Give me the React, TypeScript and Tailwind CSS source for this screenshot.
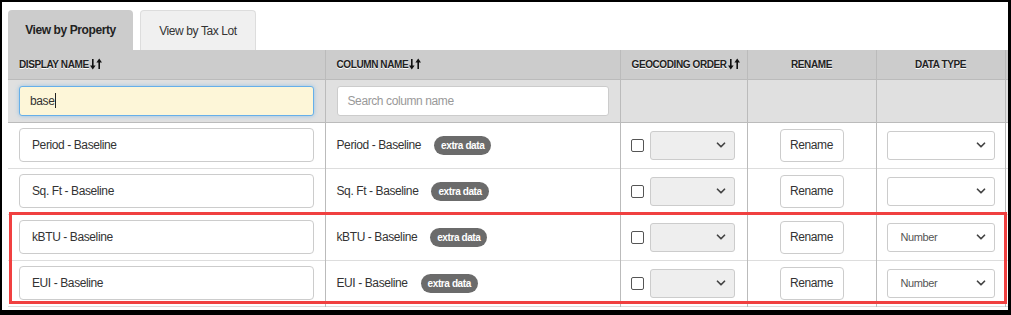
import { ChevronDown } from "lucide-react";

const font = { fontFamily: '"Liberation Sans", Arimo, sans-serif' };

interface Row {
  display: string;
  column: string;
  dataType: string;
}

const rows: Row[] = [
  { display: "Period - Baseline", column: "Period - Baseline", dataType: "" },
  { display: "Sq. Ft - Baseline", column: "Sq. Ft - Baseline", dataType: "" },
  { display: "kBTU - Baseline", column: "kBTU - Baseline", dataType: "Number" },
  { display: "EUI - Baseline", column: "EUI - Baseline", dataType: "Number" },
];

function SortArrows() {
  return (
    <span className="ml-[1px] inline-flex align-[-2px] text-[#111]">
      <svg width="12" height="12" viewBox="0 0 12 12" fill="currentColor">
        <rect x="2" y="1" width="1.6" height="7" />
        <path d="M0 7.5h5.6L2.8 11.5z" />
        <rect x="8.4" y="4" width="1.6" height="7" />
        <path d="M6.4 4.5h5.6L9.2 0.5z" />
      </svg>
    </span>
  );
}

function FakeSelect({ value, disabled, className }: { value: string; disabled?: boolean; className: string }) {
  return (
    <div
      className={`flex items-center justify-between rounded-[3px] border border-[#cccccc] pl-[13px] pr-[6px] text-[11px] text-[#555] ${
        disabled ? "bg-[#eeeeee]" : "bg-white"
      } ${className}`}
    >
      <span>{value}</span>
      <ChevronDown size={14} strokeWidth={3} className="text-[#444]" />
    </div>
  );
}

export default function App() {
  return (
    <div className="h-[315px] w-[1011px] bg-black pt-[2px] pl-[2px] pr-[3px] pb-[5px] tracking-[-0.4px]" style={font}>
      <div className="relative h-full w-full overflow-hidden bg-white pl-[6px] pt-[8px]">
        {/* Tabs */}
        <div className="flex h-[40px] items-end gap-[7px]">
          <div className="flex h-[40px] w-[125px] items-center justify-center rounded-t-[4px] bg-[#cccccc] text-[12px] font-bold text-[#222]">
            View by Property
          </div>
          <div className="flex h-[40px] w-[116px] items-center justify-center rounded-t-[4px] border border-b-0 border-[#dddddd] bg-[#f0f0f0] text-[12px] text-[#333]">
            View by Tax Lot
          </div>
        </div>

        {/* Table */}
        <table className="w-[1100px] table-fixed border-collapse text-[12px] text-[#333]">
          <colgroup>
            <col className="w-[317px]" />
            <col className="w-[295px]" />
            <col className="w-[127px]" />
            <col className="w-[129px]" />
            <col className="w-[129px]" />
            <col className="w-[103px]" />
          </colgroup>
          <thead>
            <tr className="h-[29px] whitespace-nowrap bg-[#cccccc] text-[10px] font-bold uppercase text-[#222] [text-shadow:0_1px_0_#fff]">
              <th className="border-r border-[#bbbbbb] px-[11px] text-left">
                Display Name
                <SortArrows />
              </th>
              <th className="border-r border-[#bbbbbb] px-[11px] text-left">
                Column Name
                <SortArrows />
              </th>
              <th className="border-r border-[#bbbbbb] px-[11px] text-left">
                Geocoding Order
                <SortArrows />
              </th>
              <th className="border-r border-[#bbbbbb] text-center">Rename</th>
              <th className="border-r border-[#bbbbbb] text-center">Data Type</th>
              <th></th>
            </tr>
            <tr className="h-[43px] border-y border-[#bbbbbb] bg-[#e0e0e0]">
              <td className="border-r border-[#bbbbbb] px-[11px]">
                <div className="flex h-[30px] items-center rounded-[3px] border border-[#66afe9] bg-[#fdf6d8] px-[10px] text-[12px] text-[#333] shadow-[0_0_4px_rgba(102,175,233,0.6)]">
                  base<span className="ml-[1px] inline-block h-[15px] w-[1px] bg-[#222]" />
                </div>
              </td>
              <td className="border-r border-[#bbbbbb] px-[11px]">
                <div className="flex h-[30px] items-center rounded-[3px] border border-[#cccccc] bg-white px-[10px] text-[12px] text-[#999]">
                  Search column name
                </div>
              </td>
              <td className="border-r border-[#bbbbbb]"></td>
              <td className="border-r border-[#bbbbbb]"></td>
              <td className="border-r border-[#bbbbbb]"></td>
              <td></td>
            </tr>
          </thead>
          <tbody>
            {rows.map((r, i) => (
              <tr key={i} className="h-[46px] border-b border-[#dddddd]">
                <td className="border-r border-[#bbbbbb] px-[11px]">
                  <div className="flex h-[34px] items-center rounded-[4px] border border-[#cccccc] bg-white px-[12px] text-[12px] text-[#333]">
                    {r.display}
                  </div>
                </td>
                <td className="border-r border-[#bbbbbb] px-[11px]">
                  <div className="flex items-center gap-[13px]">
                    <span>{r.column}</span>
                    <span className="rounded-full bg-[#6b6b6b] px-[7px] py-[2px] text-[10px] font-bold text-white">
                      extra data
                    </span>
                  </div>
                </td>
                <td className="border-r border-[#bbbbbb] px-[10px]">
                  <div className="flex items-center gap-[6px]">
                    <span className="h-[13px] w-[13px] rounded-[2px] border border-[#555] bg-white" />
                    <FakeSelect value="" disabled className="h-[29px] w-[85px]" />
                  </div>
                </td>
                <td className="border-r border-[#bbbbbb]">
                  <div className="flex justify-center">
                    <div className="flex h-[33px] w-[64px] items-center justify-center rounded-[4px] border border-[#cccccc] bg-white text-[12px] text-[#333]">
                      Rename
                    </div>
                  </div>
                </td>
                <td className="border-r border-[#bbbbbb] px-[10px]">
                  <FakeSelect value={r.dataType} className="h-[29px] w-[108px]" />
                </td>
                <td></td>
              </tr>
            ))}
          </tbody>
        </table>

        {/* highlight annotation */}
        <div className="pointer-events-none absolute left-[7px] top-[210px] h-[92px] w-[998px] border-[3px] border-[#f04040]" />
      </div>
    </div>
  );
}
